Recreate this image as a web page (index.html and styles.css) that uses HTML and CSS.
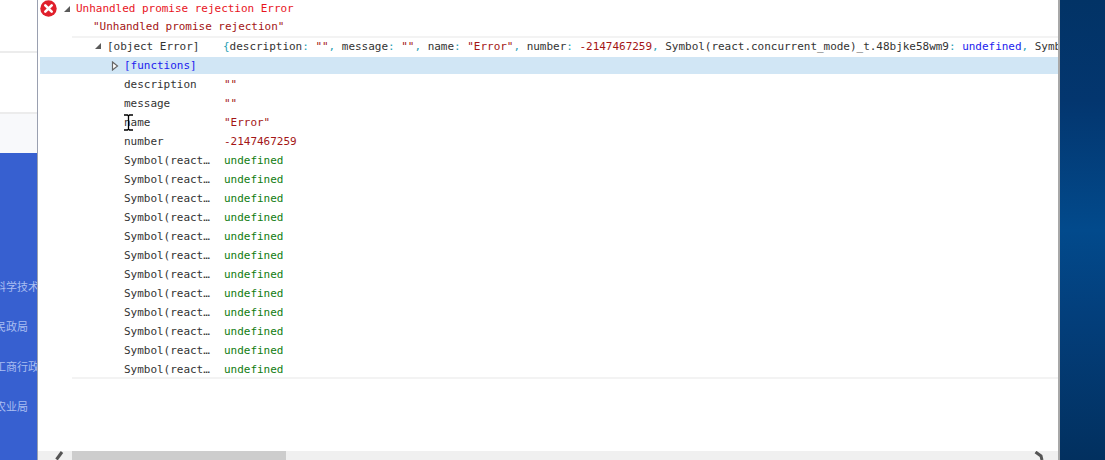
FILE: index.html
```html
<!DOCTYPE html>
<html lang="zh">
<head>
<meta charset="utf-8">
<title>Console</title>
<link rel="stylesheet" href="styles.css">
</head>
<body>
<div class="screen">
  <aside class="sidebar">
    <div class="side-white s1"></div>
    <div class="side-white s2"></div>
    <div class="side-pale"></div>
    <nav class="side-blue">
      <div class="nav-item">科学技术局</div>
      <div class="nav-item">民政局</div>
      <div class="nav-item">工商行政局</div>
      <div class="nav-item">农业局</div>
    </nav>
  </aside>
  <main class="console">
    <div class="log">
      <div class="row head">
        <svg class="err" width="17" height="17" viewBox="0 0 17 17"><circle cx="8.5" cy="8.5" r="8.2" fill="#e0202c"/><path d="M5.3 5.3l6.4 6.400M11.700 5.300l-6.400 6.400" stroke="#fff" stroke-width="2.600" stroke-linecap="round"/></svg>
        <svg class="tri t-head" width="8" height="8" viewBox="0 0 8 8"><path d="M7 1v6H1z" fill="#5a5a5a"/></svg>
        <span class="err-text">Unhandled promise rejection Error</span>
      </div>
      <div class="row msg"><span class="str">"Unhandled promise rejection"</span></div>
      <div class="row obj">
        <svg class="tri t-obj" width="8" height="8" viewBox="0 0 8 8"><path d="M7 1v6H1z" fill="#5a5a5a"/></svg>
        <span class="key-obj">[object Error]</span>
        <span class="summary"><span class="pn">{</span>description<span class="pn">:</span> <span class="str">""</span><span class="pn">,</span> message<span class="pn">:</span> <span class="str">""</span><span class="pn">,</span> name<span class="pn">:</span> <span class="str">"Error"</span><span class="pn">,</span> number<span class="pn">:</span> <span class="str">-2147467259</span><span class="pn">,</span> Symbol(react.concurrent_mode)_t.48bjke58wm9<span class="pn">:</span> <span class="und">undefined</span><span class="pn">,</span> Symbol(react.concurrent_mode)_t.48bjke58wm9</span>
      </div>
      <div class="row fn">
        <svg class="tri t-fn" width="8" height="10" viewBox="0 0 8 10"><path d="M1.500 1l5 4-5 4z" fill="#fff" stroke="#666" stroke-width="1.200"/></svg>
        <span class="und">[functions]</span>
      </div>
      <div class="row prop"><span class="k">description</span><span class="str">""</span></div>
      <div class="row prop"><span class="k">message</span><span class="str">""</span></div>
      <div class="row prop name-row"><span class="k">name</span><span class="str">"Error"</span>
        <svg class="ibeam" width="11" height="17" viewBox="0 0 11 17"><path d="M1 1h3.500l1 1 1-1H10M5.500 2v13M1 16h3.500l1-1 1 1H10" fill="none" stroke="#000" stroke-width="1.300"/></svg>
      </div>
      <div class="row prop"><span class="k">number</span><span class="str">-2147467259</span></div>
      <div class="row prop"><span class="k">Symbol(react…</span><span class="ok">undefined</span></div>
      <div class="row prop"><span class="k">Symbol(react…</span><span class="ok">undefined</span></div>
      <div class="row prop"><span class="k">Symbol(react…</span><span class="ok">undefined</span></div>
      <div class="row prop"><span class="k">Symbol(react…</span><span class="ok">undefined</span></div>
      <div class="row prop"><span class="k">Symbol(react…</span><span class="ok">undefined</span></div>
      <div class="row prop"><span class="k">Symbol(react…</span><span class="ok">undefined</span></div>
      <div class="row prop"><span class="k">Symbol(react…</span><span class="ok">undefined</span></div>
      <div class="row prop"><span class="k">Symbol(react…</span><span class="ok">undefined</span></div>
      <div class="row prop"><span class="k">Symbol(react…</span><span class="ok">undefined</span></div>
      <div class="row prop"><span class="k">Symbol(react…</span><span class="ok">undefined</span></div>
      <div class="row prop"><span class="k">Symbol(react…</span><span class="ok">undefined</span></div>
      <div class="row prop"><span class="k">Symbol(react…</span><span class="ok">undefined</span></div>
      <div class="end-line"></div>
    </div>
    <div class="scrollbar">
      <svg class="arrow-l" width="12" height="9" viewBox="0 0 12 9"><path d="M9 1L3.500 8.500" fill="none" stroke="#555" stroke-width="3"/></svg>
      <div class="thumb"></div>
      <svg class="arrow-r" width="12" height="9" viewBox="0 0 12 9"><path d="M2.500 1L8 5l1 4" fill="none" stroke="#555" stroke-width="3"/></svg>
    </div>
  </main>
  <div class="desktop"></div>
</div>
</body>
</html>
```
FILE: styles.css
```css
* { box-sizing: border-box; }
html, body { margin: 0; padding: 0; background: #fff; }
.screen {
  display: flex;
  width: 1105px;
  height: 460px;
  overflow: hidden;
  font-family: "DejaVu Sans Mono", "Liberation Mono", monospace;
  font-size: 11px;
  letter-spacing: -0.025px;
}
.sidebar {
  width: 38px;
  flex: none;
  display: flex;
  flex-direction: column;
  border-right: 1px solid #9aa0b0;
  overflow: hidden;
}
.side-white { background: #fff; border-bottom: 2px solid #ececec; }
.s1 { height: 53px; }
.s2 { height: 61px; }
.side-pale { height: 39px; background: #f8f9fb; }
.side-blue {
  flex: 1;
  background: #3760d0;
  padding-top: 123px;
  font-family: "Noto Sans CJK SC", sans-serif;
  font-size: 11px;
  letter-spacing: 0;
  color: #a9bdf0;
}
.nav-item { height: 40px; line-height: 20px; margin-left: -5px; white-space: nowrap; }
.console {
  width: 1022px;
  flex: none;
  display: flex;
  flex-direction: column;
  border-right: 2px solid #a8a8a8;
  overflow: hidden;
}
.log { flex: 1; }
.row {
  position: relative;
  display: flex;
  align-items: center;
  height: 19px;
  white-space: nowrap;
  color: #333;
  overflow: hidden;
}
.head { padding-left: 2px; height: 17px; }
.err { flex: none; }
.t-head { margin: 0 5px 0 6px; flex: none; }
.err-text { color: #e8141e; }
.msg { padding-left: 55px; height: 19px; }
.obj { margin-left: 34px; padding: 0 0 2px 22px; border-top: 2px solid #f3f3f3; height: 20px; }
.t-obj { margin-right: 5px; flex: none; }
.key-obj { width: 116px; flex: none; }
.summary { flex: none; }
.fn { margin: 1px 0 0 2px; height: 17px; background: #d1e6f5; padding-left: 71px; }
.t-fn { margin-right: 5px; flex: none; }
.fn + .prop { margin-top: 1px; }
.prop { padding-left: 86px; padding-bottom: 1px; }
.k { width: 100px; flex: none; overflow: hidden; }
.str { color: #a31515; }
.und { color: #2222ee; }
.ok { color: #107c10; }
.pn { color: #2a9fb5; }
.ibeam { position: absolute; left: 85px; top: 1px; }
.end-line { margin: -2px 0 0 34px; border-top: 2px solid #f3f3f3; }
.scrollbar {
  height: 9px;
  flex: none;
  display: flex;
  background: #f0f0f0;
  padding-left: 15px;
}
.arrow-l { flex: none; }
.thumb { width: 214px; margin-left: 7px; background: #cdcdcd; }
.arrow-r { flex: none; margin-left: 747px; }
.desktop {
  flex: 1;
  background: linear-gradient(#023366 0%, #03366f 22%, #024a8c 50%, #033f7c 68%, #02305f 100%);
}
```
